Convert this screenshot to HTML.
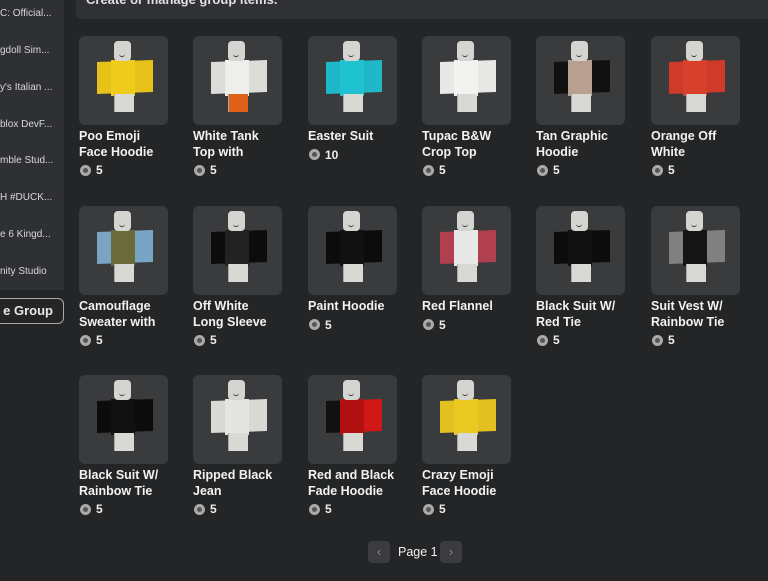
<!DOCTYPE html>
<html><head><style>
*{margin:0;padding:0;box-sizing:border-box}
body{width:768px;height:581px;background:#232527;font-family:"Liberation Sans",sans-serif;overflow:hidden;position:relative;color:#fff}
.side{position:absolute;left:0;top:0;width:64px;height:290px;background:#2e3033}
.side div{position:absolute;left:0;font-size:10px;color:#d8d8d8;white-space:nowrap;width:64px;overflow:hidden}
.btn{position:absolute;left:-30px;top:298px;width:94px;height:26px;border:1px solid #aaa;border-radius:6px;font-size:13px;font-weight:bold;color:#e8e8e8;text-align:right;padding:4px 10px 0 0}
.hdr{position:absolute;left:76px;top:-10px;width:700px;height:29px;background:#2f3134;border-radius:4px}
.hdr span{position:absolute;left:10px;top:2px;font-size:13px;font-weight:bold;color:#e0e0e0}
.item{position:absolute;width:100px}
.card{width:89px;height:89px;background:#393b3d;border-radius:6px;position:relative}
.t{margin-top:4px;font-size:12.5px;font-weight:bold;line-height:15.5px;color:#f2f2f2;white-space:nowrap}
.p{margin-top:3px;font-size:12px;font-weight:bold;color:#eee;display:flex;align-items:center}
.p i{display:inline-block;width:11px;height:11px;border-radius:50%;border:3px solid #aaa;background:#555;margin:0 5px 0 1px}
.h{position:absolute;left:35px;top:5px;width:17px;height:20px;background:#d4d4d0;border-radius:4px}
.h:after{content:"";position:absolute;left:5px;top:12px;width:6px;height:3px;border-bottom:1px solid #333;border-radius:0 0 4px 4px}
.a{position:absolute;left:18px;top:25px;width:56px;height:32px;background:var(--a);transform:skewY(-2deg)}
.b{position:absolute;left:32px;top:24px;width:24px;height:36px;background:var(--b)}
.l{position:absolute;left:35px;top:58px;width:20px;height:18px;background:var(--l,#d8d8d4);border-left:1px solid #aaa}
</style></head><body>
<div class="side">
<div style="top:8px">C: Official...</div>
<div style="top:45px">gdoll Sim...</div>
<div style="top:82px">y's Italian ...</div>
<div style="top:119px">blox DevF...</div>
<div style="top:155px">mble Stud...</div>
<div style="top:192px">H #DUCK...</div>
<div style="top:229px">e 6 Kingd...</div>
<div style="top:266px">nity Studio</div>
</div>
<div class="btn">e Group</div>
<div class="hdr"><span>Create or manage group items.</span></div>

<div class="item" style="left:79px;top:36px"><div class="card" style="--a:#e7c31a;--b:#efcb1c"><div class="a"></div><div class="b"></div><div class="l"></div><div class="h"></div></div><div class="t">Poo Emoji<br>Face Hoodie</div><div class="p"><i></i>5</div></div>
<div class="item" style="left:193px;top:36px"><div class="card" style="--a:#dcdcd8;--b:#eeeeea;--l:#e0621a"><div class="a"></div><div class="b"></div><div class="l"></div><div class="h"></div></div><div class="t">White Tank<br>Top with</div><div class="p"><i></i>5</div></div>
<div class="item" style="left:308px;top:36px"><div class="card" style="--a:#1fb8c8;--b:#20c2d2"><div class="a"></div><div class="b"></div><div class="l"></div><div class="h"></div></div><div class="t">Easter Suit</div><div class="p"><i></i>10</div></div>
<div class="item" style="left:422px;top:36px"><div class="card" style="--a:#e8e8e6;--b:#f2f2f0"><div class="a"></div><div class="b"></div><div class="l"></div><div class="h"></div></div><div class="t">Tupac B&amp;W<br>Crop Top</div><div class="p"><i></i>5</div></div>
<div class="item" style="left:536px;top:36px"><div class="card" style="--a:#111;--b:#b8a090"><div class="a"></div><div class="b"></div><div class="l"></div><div class="h"></div></div><div class="t">Tan Graphic<br>Hoodie</div><div class="p"><i></i>5</div></div>
<div class="item" style="left:651px;top:36px"><div class="card" style="--a:#d03a28;--b:#d8402c"><div class="a"></div><div class="b"></div><div class="l"></div><div class="h"></div></div><div class="t">Orange Off<br>White</div><div class="p"><i></i>5</div></div>

<div class="item" style="left:79px;top:206px"><div class="card" style="--a:#7aa4c4;--b:#6a6a3a"><div class="a"></div><div class="b"></div><div class="l"></div><div class="h"></div></div><div class="t">Camouflage<br>Sweater with</div><div class="p"><i></i>5</div></div>
<div class="item" style="left:193px;top:206px"><div class="card" style="--a:#0c0c0c;--b:#222"><div class="a"></div><div class="b"></div><div class="l"></div><div class="h"></div></div><div class="t">Off White<br>Long Sleeve</div><div class="p"><i></i>5</div></div>
<div class="item" style="left:308px;top:206px"><div class="card" style="--a:#0c0c0c;--b:#111"><div class="a"></div><div class="b"></div><div class="l"></div><div class="h"></div></div><div class="t">Paint Hoodie</div><div class="p"><i></i>5</div></div>
<div class="item" style="left:422px;top:206px"><div class="card" style="--a:#b04050;--b:#e8e8e6"><div class="a"></div><div class="b"></div><div class="l"></div><div class="h"></div></div><div class="t">Red Flannel</div><div class="p"><i></i>5</div></div>
<div class="item" style="left:536px;top:206px"><div class="card" style="--a:#0c0c0c;--b:#111"><div class="a"></div><div class="b"></div><div class="l"></div><div class="h"></div></div><div class="t">Black Suit W/<br>Red Tie</div><div class="p"><i></i>5</div></div>
<div class="item" style="left:651px;top:206px"><div class="card" style="--a:#808080;--b:#151515"><div class="a"></div><div class="b"></div><div class="l"></div><div class="h"></div></div><div class="t">Suit Vest W/<br>Rainbow Tie</div><div class="p"><i></i>5</div></div>

<div class="item" style="left:79px;top:375px"><div class="card" style="--a:#0c0c0c;--b:#111"><div class="a"></div><div class="b"></div><div class="l"></div><div class="h"></div></div><div class="t">Black Suit W/<br>Rainbow Tie</div><div class="p"><i></i>5</div></div>
<div class="item" style="left:193px;top:375px"><div class="card" style="--a:#d8d8d4;--b:#e4e4e0"><div class="a"></div><div class="b"></div><div class="l"></div><div class="h"></div></div><div class="t">Ripped Black<br>Jean</div><div class="p"><i></i>5</div></div>
<div class="item" style="left:308px;top:375px"><div class="card" style="--a:linear-gradient(90deg,#111 40%,#d01818 60%);--b:#b01010"><div class="a"></div><div class="b"></div><div class="l"></div><div class="h"></div></div><div class="t">Red and Black<br>Fade Hoodie</div><div class="p"><i></i>5</div></div>
<div class="item" style="left:422px;top:375px"><div class="card" style="--a:#e2c020;--b:#ebc81f"><div class="a"></div><div class="b"></div><div class="l"></div><div class="h"></div></div><div class="t">Crazy Emoji<br>Face Hoodie</div><div class="p"><i></i>5</div></div>

<div style="position:absolute;left:368px;top:541px;width:22px;height:22px;border-radius:4px;background:#3a3c3f;color:#888;font-size:13px;text-align:center;line-height:21px">&#8249;</div>
<div style="position:absolute;left:398px;top:545px;font-size:12.5px;color:#f0f0f0">Page 1</div>
<div style="position:absolute;left:440px;top:541px;width:22px;height:22px;border-radius:4px;background:#3a3c3f;color:#888;font-size:13px;text-align:center;line-height:21px">&#8250;</div>
</body></html>
